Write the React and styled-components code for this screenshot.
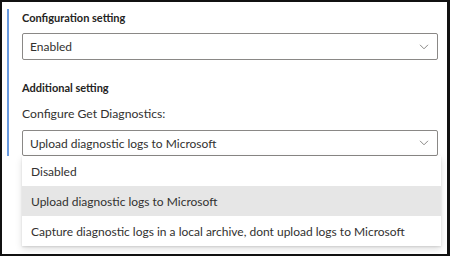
import React from "react";
import styled, { createGlobalStyle } from "styled-components";

const GlobalStyle = createGlobalStyle`
  html, body {
    margin: 0;
    padding: 0;
    background: #fff;
  }
  body {
    font-family: Lato, "Open Sans", sans-serif;
    color: #323130;
  }
  * {
    box-sizing: border-box;
  }
`;

const options = [
  "Disabled",
  "Upload diagnostic logs to Microsoft",
  "Capture diagnostic logs in a local archive, dont upload logs to Microsoft",
];

function Chevron() {
  return (
    <svg width="10" height="6" viewBox="0 0 10 6" fill="none">
      <path d="M1 0.8 L5 4.8 L9 0.8" stroke="#8a8886" strokeWidth="1" />
    </svg>
  );
}

function Select({ value, height, open, selected }) {
  return (
    <SelectWrap>
      <SelectBox $height={height}>
        <SelectValue>{value}</SelectValue>
        <Chevron />
      </SelectBox>
      {open && (
        <ListBox>
          {options.map((o) => (
            <Option key={o} $selected={o === selected}>
              {o}
            </Option>
          ))}
        </ListBox>
      )}
    </SelectWrap>
  );
}

export default function App() {
  return (
    <>
      <GlobalStyle />
      <Frame>
        <Section>
          <Heading>Configuration setting</Heading>
          <Select value="Enabled" height={27} />
          <Heading $top={20}>Additional setting</Heading>
          <Label>Configure Get Diagnostics:</Label>
          <Select
            value="Upload diagnostic logs to Microsoft"
            height={26}
            open
            selected="Upload diagnostic logs to Microsoft"
          />
        </Section>
      </Frame>
    </>
  );
}

const Frame = styled.div`
  width: 450px;
  height: 256px;
  border: 2px solid #111;
  border-right-width: 3px;
  background: #fff;
  padding: 7px 9px 0 5px;
  overflow: hidden;
`;

const Section = styled.div`
  display: flex;
  flex-direction: column;
  border-left: 2px solid #6a9be0;
  padding: 1px 0 0 13px;
`;

const Heading = styled.div`
  font-size: 11px;
  font-weight: 700;
  line-height: 16px;
  color: #252423;
  margin-top: ${(p) => p.$top || 0}px;
  margin-bottom: 7px;
`;

const Label = styled.div`
  font-size: 12.2px;
  line-height: 20px;
  color: #323130;
  margin-top: 1px;
  margin-bottom: 6px;
`;

const SelectWrap = styled.div`
  position: relative;
  width: 416px;
`;

const SelectBox = styled.div`
  display: flex;
  align-items: center;
  justify-content: space-between;
  height: ${(p) => p.$height}px;
  border: 1px solid #8a8886;
  border-radius: 2px;
  padding: 0 8px 0 7px;
  background: #fff;
`;

const SelectValue = styled.span`
  font-size: 12px;
  color: #323130;
  white-space: nowrap;
`;

const ListBox = styled.div`
  position: absolute;
  top: 100%;
  left: 0;
  width: 419px;
  background: #fff;
  box-shadow: 0 3px 7px rgba(0, 0, 0, 0.13), 0 0.6px 1.8px rgba(0, 0, 0, 0.11);
  display: flex;
  flex-direction: column;
`;

const Option = styled.div`
  height: 30px;
  display: flex;
  align-items: center;
  padding-left: 9px;
  font-size: 12px;
  white-space: nowrap;
  color: #323130;
  background: ${(p) => (p.$selected ? "#e6e6e6" : "#fff")};
`;
